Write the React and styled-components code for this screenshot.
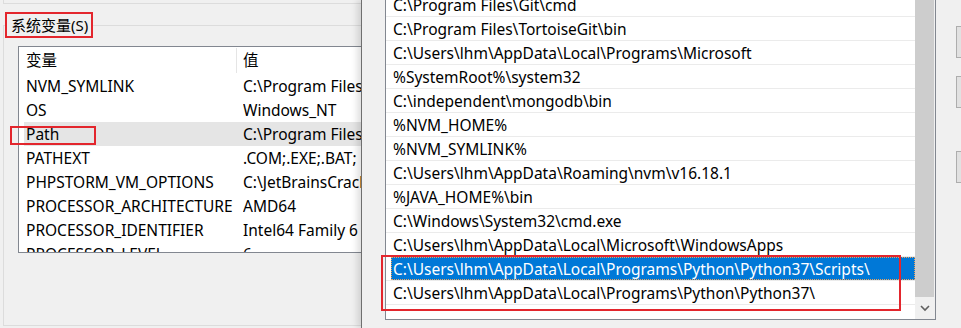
import React from 'react';
import styled, { createGlobalStyle } from 'styled-components';

const GlobalStyle = createGlobalStyle`
  html, body {
    margin: 0;
    padding: 0;
    background: #f0f0f0;
  }
  body {
    font-family: "Noto Sans", "Noto Sans CJK SC", sans-serif;
    overflow: hidden;
  }
`;

const Screen = styled.div`
  display: flex;
  width: 961px;
  height: 328px;
  overflow: hidden;
  background: #f0f0f0;
  color: #000;
  font-size: 15.5px;
`;

/* ---------- back dialog (环境变量) ---------- */

const BackDialog = styled.div`
  position: relative;
  width: 361px;
  flex-shrink: 0;
  display: flex;
  flex-direction: column;
  overflow: hidden;
`;

const PrevGroupEdge = styled.div`
  margin-left: 3px;
  height: 3px;
  border-left: 1px solid #dcdcdc;
  border-bottom: 1px solid #dcdcdc;
`;

const GroupBox = styled.fieldset`
  flex: 1;
  min-width: 0;
  margin: 8px 0 2px 3px;
  padding: 0 0 0 1px;
  border: 1px solid #dcdcdc;
  border-right: none;
`;

const GroupLegend = styled.legend`
  box-sizing: border-box;
  height: 26px;
  padding: 0 3px 0 4px;
  border: 2px solid #e3262d;
  line-height: 22px;
  font-size: 15px;
`;

const ListView = styled.div`
  box-sizing: border-box;
  width: 345px;
  height: 207px;
  margin: 8px 0 0 13px;
  border: 1px solid #828790;
  background: #fff;
  overflow: hidden;
`;

const Header = styled.div`
  display: flex;
  height: 27px;
  align-items: center;
`;

const HeaderCell = styled.div`
  box-sizing: border-box;
  width: ${(p) => p.$width || 'auto'};
  height: 25px;
  line-height: 25px;
  padding-left: ${(p) => p.$pad}px;
  border-right: ${(p) => (p.$divider ? '1px solid #e5e5e5' : 'none')};
`;

const VarRow = styled.div`
  display: flex;
  align-items: center;
  height: 24px;
  margin-left: 5px;
  background: ${(p) => (p.$hover ? '#e5e5e5' : 'transparent')};
  white-space: nowrap;
`;

const NameCell = styled.div`
  box-sizing: border-box;
  width: 219px;
  padding-left: 2px;
  flex-shrink: 0;
`;

const ValueCell = styled.div`
  flex: 1;
  min-width: 0;
  overflow: hidden;
  white-space: nowrap;
`;

const Marker = styled.div`
  position: absolute;
  box-sizing: border-box;
  border: 2px solid #e3262d;
  pointer-events: none;
`;

/* ---------- front dialog (编辑环境变量) ---------- */

const FrontDialog = styled.div`
  position: relative;
  flex: 1;
  display: flex;
  align-items: flex-start;
  padding-left: 23px;
  border-left: 1px solid #6f6f6f;
  box-shadow: -4px 0 6px rgba(0, 0, 0, 0.12);
  background: #f0f0f0;
`;

const ListBox = styled.div`
  box-sizing: border-box;
  display: flex;
  width: 551px;
  height: 328px;
  margin-top: -8px;
  flex-shrink: 0;
  border: 1px solid #828790;
  background: #fff;
`;

const Items = styled.div`
  flex: 1;
  overflow: hidden;
`;

const PathRow = styled.div`
  box-sizing: border-box;
  display: flex;
  height: 24px;
  padding-left: 5px;
  border-bottom: 1px solid #ebebeb;
`;

const PathLabel = styled.div`
  flex: 1;
  padding: 2px 0 0 2px;
  line-height: 21px;
  white-space: nowrap;
  background: ${(p) => (p.$selected ? '#0078d7' : 'transparent')};
  color: ${(p) => (p.$selected ? '#fff' : '#000')};
  outline: ${(p) => (p.$selected ? '1px dotted #f0a35a' : 'none')};
  outline-offset: -1px;
`;

const ScrollBar = styled.div`
  display: flex;
  flex-direction: column;
  width: 20px;
  background: #f0f0f0;
`;

const Thumb = styled.div`
  flex: 1;
  margin-right: 1px;
  background: #cdcdcd;
`;

const ArrowButton = styled.div`
  display: flex;
  align-items: center;
  justify-content: center;
  height: 22px;
`;

const ButtonColumn = styled.div`
  display: flex;
  flex-direction: column;
  gap: 18px;
  margin-left: 20px;
  padding-top: 26px;
`;

const DlgButton = styled.button`
  box-sizing: border-box;
  width: 110px;
  height: 32px;
  margin-top: ${(p) => (p.$spaced ? '25px' : '0')};
  border: 1px solid #adadad;
  background: #e1e1e1;
  font: inherit;
  font-size: 15px;
  color: #000;
`;

const Watermark = styled.div`
  position: absolute;
  right: 15px;
  bottom: 7px;
  font-family: "Liberation Sans", sans-serif;
  font-size: 12px;
  color: #b2b2b2;
  pointer-events: none;
`;

const variables = [
  ['NVM_SYMLINK', 'C:\\Program Files\\'],
  ['OS', 'Windows_NT'],
  ['Path', 'C:\\Program Files\\'],
  ['PATHEXT', '.COM;.EXE;.BAT;'],
  ['PHPSTORM_VM_OPTIONS', 'C:\\JetBrainsCrack\\'],
  ['PROCESSOR_ARCHITECTURE', 'AMD64'],
  ['PROCESSOR_IDENTIFIER', 'Intel64 Family 6 M'],
  ['PROCESSOR_LEVEL', '6'],
];

const paths = [
  'C:\\Program Files\\Git\\cmd',
  'C:\\Program Files\\TortoiseGit\\bin',
  'C:\\Users\\lhm\\AppData\\Local\\Programs\\Microsoft',
  '%SystemRoot%\\system32',
  'C:\\independent\\mongodb\\bin',
  '%NVM_HOME%',
  '%NVM_SYMLINK%',
  'C:\\Users\\lhm\\AppData\\Roaming\\nvm\\v16.18.1',
  '%JAVA_HOME%\\bin',
  'C:\\Windows\\System32\\cmd.exe',
  'C:\\Users\\lhm\\AppData\\Local\\Microsoft\\WindowsApps',
  'C:\\Users\\lhm\\AppData\\Local\\Programs\\Python\\Python37\\Scripts\\',
  'C:\\Users\\lhm\\AppData\\Local\\Programs\\Python\\Python37\\',
];

export default function App() {
  return (
    <>
      <GlobalStyle />
      <Screen>
        <BackDialog>
          <PrevGroupEdge />
          <GroupBox>
            <GroupLegend>系统变量(S)</GroupLegend>
            <ListView>
              <Header>
                <HeaderCell $width='218px' $pad={7} $divider>变量</HeaderCell>
                <HeaderCell $pad={6}>值</HeaderCell>
              </Header>
              {variables.map(([name, value]) => (
                <VarRow key={name} $hover={name === 'Path'}>
                  <NameCell>{name}</NameCell>
                  <ValueCell>{value}</ValueCell>
                </VarRow>
              ))}
            </ListView>
          </GroupBox>
          <Marker style={{ left: 10, top: 126, width: 86, height: 19 }} />
        </BackDialog>

        <FrontDialog>
          <ListBox>
            <Items>
              {paths.map((p, i) => (
                <PathRow key={p}>
                  <PathLabel $selected={i === 11}>{p}</PathLabel>
                </PathRow>
              ))}
            </Items>
            <ScrollBar>
              <Thumb />
              <ArrowButton>
                <svg width='10' height='7' viewBox='0 0 10 7'>
                  <polyline points='1,1 5,5 9,1' fill='none' stroke='#606060' strokeWidth='1.6' />
                </svg>
              </ArrowButton>
            </ScrollBar>
          </ListBox>
          <ButtonColumn>
            <DlgButton>编辑(E)</DlgButton>
            <DlgButton>浏览(B)...</DlgButton>
            <DlgButton $spaced>上移(U)</DlgButton>
          </ButtonColumn>
          <Marker style={{ left: 19, top: 255, width: 520, height: 56 }} />
          <Watermark>CSDN @L_hm</Watermark>
        </FrontDialog>
      </Screen>
    </>
  );
}
